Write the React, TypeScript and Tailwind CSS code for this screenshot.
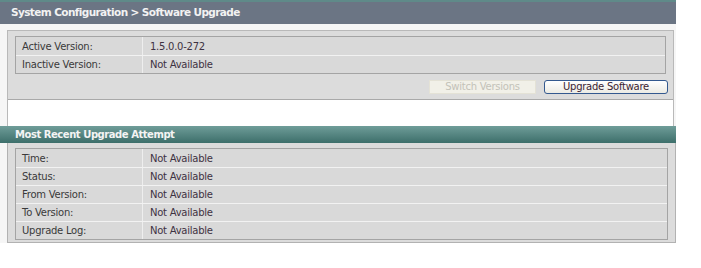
const rowsTop = [
  ['Active Version:', '1.5.0.0-272'],
  ['Inactive Version:', 'Not Available'],
];

const rowsBottom = [
  ['Time:', 'Not Available'],
  ['Status:', 'Not Available'],
  ['From Version:', 'Not Available'],
  ['To Version:', 'Not Available'],
  ['Upgrade Log:', 'Not Available'],
];

function InfoTable({ rows }: { rows: string[][] }) {
  return (
    <div className="border border-[#a4a4a4] bg-[#d9d9d9]">
      {rows.map(([label, value], i) => (
        <div
          key={label}
          className={`flex h-[18px] items-center ${i > 0 ? 'border-t border-[#f2f2f2]' : ''}`}
        >
          <div className="flex h-full w-[127px] items-center border-r border-[#eeeeee] pl-[6px] text-[#3a3a3a]">
            {label}
          </div>
          <div className="pl-[7px] text-[#3e3242]">{value}</div>
        </div>
      ))}
    </div>
  );
}

export default function App() {
  return (
    <div
      className="h-[268px] w-[701px] bg-white text-[10px] tracking-[-0.25px]"
      style={{ fontFamily: '"DejaVu Sans", Verdana, sans-serif' }}
    >
      <div className="w-[676px]">
        {/* page title */}
        <div className="flex h-[24px] items-center border-t-2 border-[#5f8a89] bg-[#6b7584] pl-[11px] text-[10.5px] font-bold tracking-[-0.6px] text-[#f2f2f2]">
          System Configuration &gt; Software Upgrade
        </div>

        {/* versions */}
        <div className="bg-[#f6f6f6] pl-[7px] pr-[2px] pt-[6px]">
          <div className="border-x border-t border-[#b9b9b9]">
            <div className="border-b border-[#a9a9a9] bg-[#dcdcdc] px-[7px] pb-[5px] pt-[5px]">
              <InfoTable rows={rowsTop} />
              <div className="mr-[-2px] mt-[6px] flex justify-end gap-[8px]">
                <button
                  disabled
                  className="h-[14px] w-[107px] border border-[#e4e2d6] bg-[#f1f0e8] text-[10px] leading-none text-[#c3c2b8]"
                >
                  Switch Versions
                </button>
                <button className="h-[14px] w-[124px] rounded-[3px] border border-[#34598f] bg-gradient-to-b from-white to-[#ecebe4] text-[10px] leading-none text-[#3b2433]">
                  Upgrade Software
                </button>
              </div>
            </div>
            <div className="h-[26px] bg-white" />
          </div>
        </div>

        {/* last attempt */}
        <div className="flex h-[17px] items-center bg-gradient-to-b from-[#6f9d99] to-[#3d6f6b] pl-[15px] text-[10px] font-bold tracking-[-0.45px] text-[#f4f4f4]">
          Most Recent Upgrade Attempt
        </div>
        <div className="bg-[#f6f6f6] pl-[7px]">
          <div className="border-x border-b border-[#b2b2b2] bg-[#dcdcdc] px-[7px] pb-[2px] pt-[5px]">
            <InfoTable rows={rowsBottom} />
          </div>
        </div>
      </div>
    </div>
  );
}
